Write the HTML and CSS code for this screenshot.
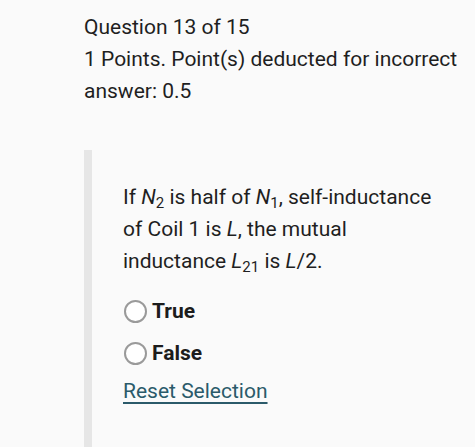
FILE: index.html
```html
<!DOCTYPE html>
<html>
<head>
<meta charset="utf-8">
<link rel="stylesheet" href="styles.css">
</head>
<body>
<div class="page">
  <div class="header">
    <div>Question 13 of 15</div>
    <div>1 Points. Point(s) deducted for incorrect answer: 0.5</div>
  </div>
  <div class="panel">
    <p class="question">If <i>N</i><sub>2</sub> is half of <i>N</i><sub>1</sub>, self-inductance of Coil 1 is <i>L</i>, the mutual inductance <i>L</i><sub>21</sub> is <i>L</i>/2.</p>
    <div class="options">
      <label class="option"><span class="radio"></span><span class="label">True</span></label>
      <label class="option"><span class="radio"></span><span class="label">False</span></label>
    </div>
    <a class="reset" href="#">Reset Selection</a>
  </div>
</div>
</body>
</html>
```
FILE: styles.css
```css
html, body {
  margin: 0;
  padding: 0;
  background: #fafafa;
  height: 100%;
}
body {
  font-family: Roboto, "Noto Sans", sans-serif;
  font-size: 21px;
  line-height: 32px;
  color: #1f1f1f;
}
.page {
  padding: 11px 0 0 84px;
  height: 100%;
  box-sizing: border-box;
  display: flex;
  flex-direction: column;
}
.header {
  width: 382px;
}
.panel {
  margin-top: 43px;
  flex: 1;
  border-left: 8px solid #e6e6e6;
  padding: 31px 0 0 31px;
}
.question {
  margin: 0;
  width: 318px;
}
.question sub {
  font-size: 15px;
  line-height: 1;
  vertical-align: -4px;
}
.options {
  margin-top: 13px;
  display: flex;
  flex-direction: column;
}
.option {
  display: flex;
  align-items: center;
  height: 42px;
}
.radio {
  width: 19px;
  height: 19px;
  border: 2px solid #9a9a9a;
  border-radius: 50%;
  background: #fff;
  margin-left: 1px;
  margin-right: 5px;
}
.label {
  font-weight: 700;
  line-height: 42px;
  color: #1c1c1c;
}
.reset {
  display: inline-block;
  margin-top: 1px;
  color: #2b5a6a;
  text-decoration: underline;
  text-decoration-thickness: 2px;
  text-underline-offset: 4px;
}
```
